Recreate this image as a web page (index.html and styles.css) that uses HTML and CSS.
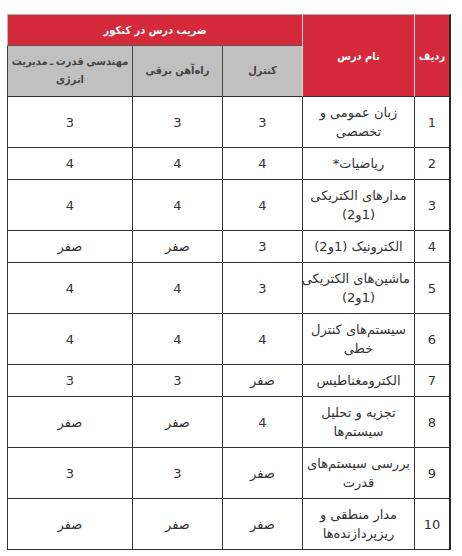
FILE: index.html
```html
<!DOCTYPE html>
<html lang="fa">
<head>
<meta charset="utf-8">
<title>ضریب دروس کنکور</title>
<link rel="stylesheet" href="styles.css">
</head>
<body>
<div class="page">
<table class="grade-table" dir="rtl">
  <colgroup>
    <col class="c-num">
    <col class="c-name">
    <col class="c-ctrl">
    <col class="c-rail">
    <col class="c-power">
  </colgroup>
  <thead>
    <tr class="row-red">
      <th class="h-red h-side" rowspan="2">ردیف</th>
      <th class="h-red h-side" rowspan="2">نام درس</th>
      <th class="h-red h-group" colspan="3">ضریب درس در کنکور</th>
    </tr>
    <tr class="row-grey">
      <th class="h-grey">کنترل</th>
      <th class="h-grey">راه‌آهن برقی</th>
      <th class="h-grey h-wide">مهندسی قدرت ـ مدیریت<br>انرژی</th>
    </tr>
  </thead>
  <tbody>
    <tr><td>1</td><td>زبان عمومی و<br>تخصصی</td><td>3</td><td>3</td><td>3</td></tr>
    <tr><td>2</td><td>ریاضیات*</td><td>4</td><td>4</td><td>4</td></tr>
    <tr><td>3</td><td>مدارهای الکتریکی<br>(1و2)</td><td>4</td><td>4</td><td>4</td></tr>
    <tr><td>4</td><td>الکترونیک (1و2)</td><td>3</td><td>صفر</td><td>صفر</td></tr>
    <tr><td>5</td><td>ماشین‌های الکتریکی<br>(1و2)</td><td>3</td><td>4</td><td>4</td></tr>
    <tr><td>6</td><td>سیستم‌های کنترل<br>خطی</td><td>4</td><td>4</td><td>4</td></tr>
    <tr><td>7</td><td>الکترومغناطیس</td><td>صفر</td><td>3</td><td>3</td></tr>
    <tr><td>8</td><td>تجزیه و تحلیل<br>سیستم‌ها</td><td>4</td><td>صفر</td><td>صفر</td></tr>
    <tr><td>9</td><td>بررسی سیستم‌های<br>قدرت</td><td>صفر</td><td>3</td><td>3</td></tr>
    <tr><td>10</td><td>مدار منطقی و<br>ریزپردازنده‌ها</td><td>صفر</td><td>صفر</td><td>صفر</td></tr>
  </tbody>
</table>
</div>
</body>
</html>
```
FILE: styles.css
```css
html, body {
  margin: 0;
  padding: 0;
  background: #ffffff;
}
body {
  font-family: "DejaVu Sans", Tahoma, sans-serif;
}
.page {
  direction: ltr;
  padding: 14px 0 0 7px;
}
.grade-table {
  direction: rtl;
  border-collapse: separate;
  border-spacing: 0;
  table-layout: fixed;
  width: 444px;
  border-top: 1px solid #b0b0b0;
  border-right: 2px solid #2a2a2a;
}
.c-num { width: 35px; }
.c-name { width: 112px; }
.c-ctrl { width: 80px; }
.c-rail { width: 90px; }
.c-power { width: 125px; }

.grade-table th,
.grade-table td {
  box-sizing: border-box;
  text-align: center;
  vertical-align: middle;
  white-space: nowrap;
}
.grade-table th {
  font-family: "DejaVu Sans Condensed", "DejaVu Sans", sans-serif;
  font-size: 11px;
  font-weight: bold;
}
.h-red {
  background: #d42a3b;
  color: #ffffff;
  border-left: 1px solid #d8d8d8;
  padding: 6px 2px 5px;
  line-height: 19px;
}
.h-side {
  border-bottom: 1px solid #333333;
}
.h-group {
  border-bottom: 1px solid #555555;
  border-left-color: #bdbdbd;
}
.h-grey {
  background: #c0c0c0;
  color: #444444;
  border-left: 1px solid #444444;
  border-bottom: 1px solid #333333;
  padding: 7px 2px;
  line-height: 18px;
}
.h-wide {
  font-size: 10px;
  letter-spacing: -0.3px;
  word-spacing: -1px;
}
.grade-table td {
  font-size: 13px;
  color: #333333;
  line-height: 19px;
  padding: 6px 4px;
  border-left: 1px solid #333333;
  border-bottom: 1px solid #333333;
}
```
